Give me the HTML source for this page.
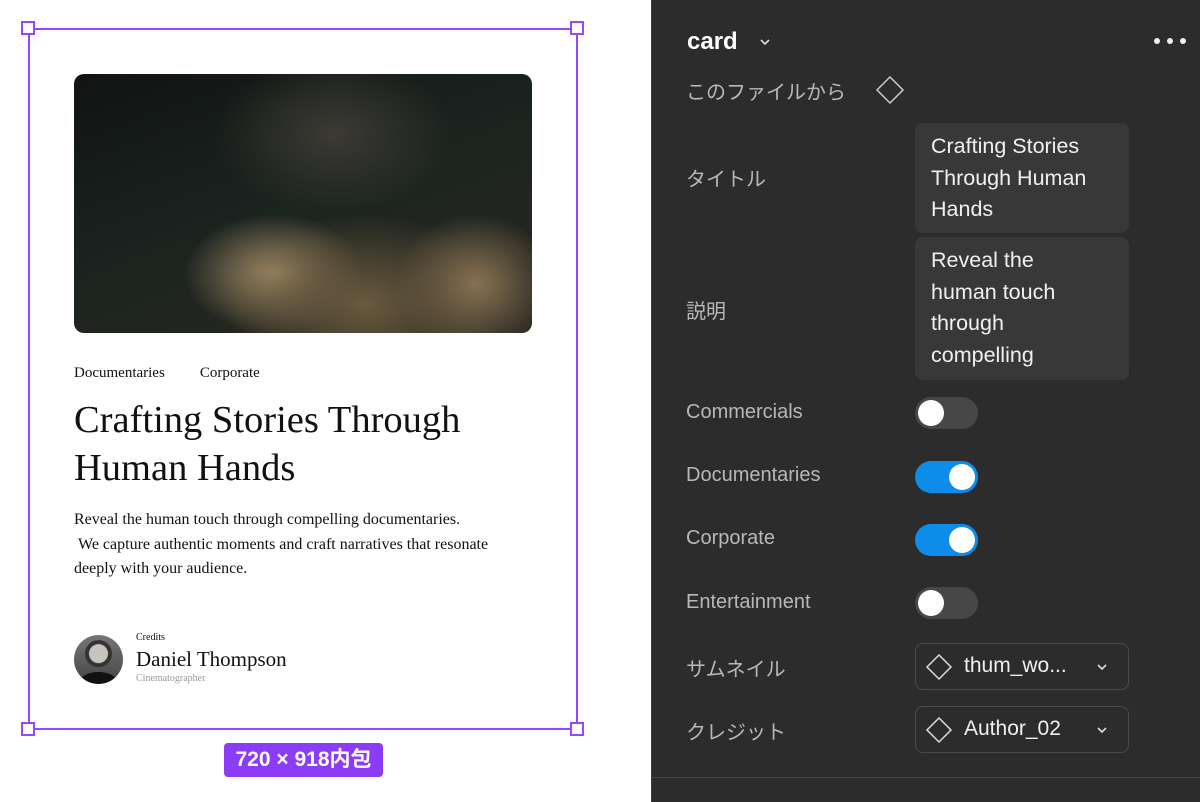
<!DOCTYPE html>
<html><head><meta charset="utf-8"><style>
*{margin:0;padding:0;box-sizing:border-box}
body{width:1200px;height:802px;background:#fff;position:relative;overflow:hidden;font-family:"Liberation Sans","Noto Sans CJK JP",sans-serif}
.a{position:absolute}
.serif{font-family:"Liberation Serif","Noto Serif CJK SC",serif;color:#111}
.panel{left:651px;top:0;width:549px;height:802px;background:#2c2c2c;border-left:1px solid #3a3a3a}
.lbl{position:absolute;left:34px;color:#b8b8b8;font-size:20px}
.box{position:absolute;left:263px;width:214px;background:#383838;border-radius:8px;color:#f0f0f0;font-size:21.5px;line-height:31.5px;padding:8px 26px 8px 16px}
.tg{position:absolute;left:263px;width:63px;height:32px;border-radius:16px;background:#474747}
.tg::after{content:"";position:absolute;top:3px;left:3px;width:26px;height:26px;border-radius:50%;background:#fff}
.tg.on{background:#0d8ce9}.tg.on::after{left:34px}
.dd{position:absolute;left:263px;width:214px;height:47px;border:1.5px solid #4a4a4a;border-radius:8px;color:#f0f0f0;font-size:21px}
.h{width:14px;height:14px;background:#fff;border:2px solid #9747ff}
</style></head><body>
<div class="a" style="left:28px;top:28px;width:550px;height:702px;border:2px solid #9747ff"></div>
<div class="a h" style="left:21px;top:21px"></div><div class="a h" style="left:570px;top:21px"></div>
<div class="a h" style="left:21px;top:722px"></div><div class="a h" style="left:570px;top:722px"></div>
<div class="a" style="left:224px;top:743px;width:159px;height:34px;background:#8c3cf5;border-radius:4px;color:#fff;font-size:21px;font-weight:bold;text-align:center;line-height:34px">720 × 918内包</div>
<div class="a" style="left:74px;top:74px;width:458px;height:259px;border-radius:10px;overflow:hidden;background:radial-gradient(ellipse 140px 90px at 290px 230px,#6a5a3e,transparent),radial-gradient(ellipse 90px 60px at 200px 200px,#a08a66,transparent),radial-gradient(ellipse 80px 70px at 400px 210px,#8d7656,transparent),radial-gradient(ellipse 120px 80px at 260px 60px,#3c3a35,transparent),linear-gradient(160deg,#101412,#1c2420 50%,#2a2820)"></div>
<div class="a serif" style="left:74px;top:365px;font-size:15px">Documentaries<span style="margin-left:35px">Corporate</span></div>
<div class="a serif" style="left:74px;top:396px;font-size:38.5px;line-height:48px">Crafting Stories Through<br>Human Hands</div>
<div class="a serif" style="left:74px;top:508px;font-size:16px;line-height:24.5px">Reveal the human touch through compelling documentaries.<br>&nbsp;We capture authentic moments and craft narratives that resonate<br>deeply with your audience.</div>
<div class="a" style="left:74px;top:635px;width:49px;height:49px;border-radius:50%;background:radial-gradient(circle at 50% 38%,#c8c4c0 0 9px,#333 10px 13px,transparent 14px),radial-gradient(ellipse 20px 12px at 50% 100%,#111 0 100%,transparent),linear-gradient(#777,#444)"></div>
<div class="a serif" style="left:136px;top:632px;font-size:10px">Credits</div>
<div class="a serif" style="left:136px;top:647px;font-size:21px">Daniel Thompson</div>
<div class="a serif" style="left:136px;top:673px;font-size:10px;color:#999">Cinematographer</div>

<div class="a panel">
<div class="a" style="left:35px;top:28px;color:#fff;font-size:24px;font-weight:bold">card</div>
<svg class="a" style="left:107px;top:37px" width="12" height="10"><path d="M2 3l4 4 4-4" stroke="#ddd" stroke-width="1.6" fill="none"/></svg>
<div class="a" style="left:502px;top:38px;width:6px;height:6px;border-radius:50%;background:#eee;box-shadow:13px 0 #eee,26px 0 #eee"></div>
<div class="lbl" style="top:76px">このファイルから</div>
<svg class="a" style="left:223px;top:75px" width="30" height="30"><path d="M15 2L28 15 15 28 2 15Z" stroke="#ccc" stroke-width="1.5" fill="none"/></svg>
<div class="lbl" style="top:163px">タイトル</div>
<div class="box" style="top:123px;height:110px">Crafting Stories Through Human Hands</div>
<div class="lbl" style="top:295px">説明</div>
<div class="box" style="top:237px;height:143px">Reveal the human touch through compelling</div>
<div class="lbl" style="top:401px">Commercials</div><div class="tg" style="top:397px"></div>
<div class="lbl" style="top:464px">Documentaries</div><div class="tg on" style="top:461px"></div>
<div class="lbl" style="top:527px">Corporate</div><div class="tg on" style="top:524px"></div>
<div class="lbl" style="top:591px">Entertainment</div><div class="tg" style="top:587px"></div>
<div class="lbl" style="top:653px">サムネイル</div>
<div class="dd" style="top:643px"><svg class="a" style="left:9px;top:9px" width="28" height="28"><path d="M14 2L26 14 14 26 2 14Z" stroke="#ddd" stroke-width="1.5" fill="none"/></svg><span class="a" style="left:48px;top:10px">thum_wo...</span><svg class="a" style="left:180px;top:18px" width="12" height="10"><path d="M2 3l4 4 4-4" stroke="#ddd" stroke-width="1.6" fill="none"/></svg></div>
<div class="lbl" style="top:716px">クレジット</div>
<div class="dd" style="top:706px"><svg class="a" style="left:9px;top:9px" width="28" height="28"><path d="M14 2L26 14 14 26 2 14Z" stroke="#ddd" stroke-width="1.5" fill="none"/></svg><span class="a" style="left:48px;top:10px">Author_02</span><svg class="a" style="left:180px;top:18px" width="12" height="10"><path d="M2 3l4 4 4-4" stroke="#ddd" stroke-width="1.6" fill="none"/></svg></div>
<div class="a" style="left:0;top:777px;width:549px;height:1px;background:#444"></div>
</div>
</body></html>
